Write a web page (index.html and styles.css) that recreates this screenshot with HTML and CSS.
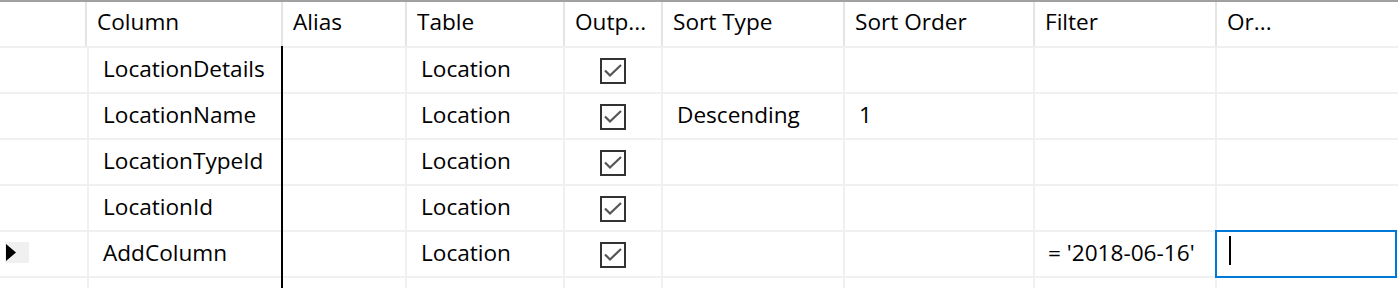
FILE: index.html
```html
<!DOCTYPE html>
<html>
<head>
<meta charset="utf-8">
<link rel="stylesheet" href="styles.css">
</head>
<body>
<div class="grid">
  <div class="row head">
    <div class="cell c0"></div>
    <div class="cell c1">Column</div>
    <div class="cell c2">Alias</div>
    <div class="cell c3">Table</div>
    <div class="cell c4">Outp...</div>
    <div class="cell c5">Sort Type</div>
    <div class="cell c6">Sort Order</div>
    <div class="cell c7">Filter</div>
    <div class="cell c8">Or...</div>
  </div>
  <div class="body">
    <div class="row">
      <div class="cell c0"></div>
      <div class="cell c1">LocationDetails</div>
      <div class="cell c2"></div>
      <div class="cell c3">Location</div>
      <div class="cell c4"><svg class="chk" width="26" height="26" viewBox="0 0 26 26"><rect x="1" y="1" width="24" height="24"/><polyline points="5,12.5 10,17.5 21,7"/></svg></div>
      <div class="cell c5"></div>
      <div class="cell c6"></div>
      <div class="cell c7"></div>
      <div class="cell c8"></div>
    </div>
    <div class="row">
      <div class="cell c0"></div>
      <div class="cell c1">LocationName</div>
      <div class="cell c2"></div>
      <div class="cell c3">Location</div>
      <div class="cell c4"><svg class="chk" width="26" height="26" viewBox="0 0 26 26"><rect x="1" y="1" width="24" height="24"/><polyline points="5,12.5 10,17.5 21,7"/></svg></div>
      <div class="cell c5">Descending</div>
      <div class="cell c6">1</div>
      <div class="cell c7"></div>
      <div class="cell c8"></div>
    </div>
    <div class="row">
      <div class="cell c0"></div>
      <div class="cell c1">LocationTypeId</div>
      <div class="cell c2"></div>
      <div class="cell c3">Location</div>
      <div class="cell c4"><svg class="chk" width="26" height="26" viewBox="0 0 26 26"><rect x="1" y="1" width="24" height="24"/><polyline points="5,12.5 10,17.5 21,7"/></svg></div>
      <div class="cell c5"></div>
      <div class="cell c6"></div>
      <div class="cell c7"></div>
      <div class="cell c8"></div>
    </div>
    <div class="row">
      <div class="cell c0"></div>
      <div class="cell c1">LocationId</div>
      <div class="cell c2"></div>
      <div class="cell c3">Location</div>
      <div class="cell c4"><svg class="chk" width="26" height="26" viewBox="0 0 26 26"><rect x="1" y="1" width="24" height="24"/><polyline points="5,12.5 10,17.5 21,7"/></svg></div>
      <div class="cell c5"></div>
      <div class="cell c6"></div>
      <div class="cell c7"></div>
      <div class="cell c8"></div>
    </div>
    <div class="row">
      <div class="cell c0"><svg class="ind" width="24" height="21" viewBox="0 0 24 21"><polygon points="1,2 1,19 11,10.5"/></svg></div>
      <div class="cell c1">AddColumn</div>
      <div class="cell c2"></div>
      <div class="cell c3">Location</div>
      <div class="cell c4"><svg class="chk" width="26" height="26" viewBox="0 0 26 26"><rect x="1" y="1" width="24" height="24"/><polyline points="5,12.5 10,17.5 21,7"/></svg></div>
      <div class="cell c5"></div>
      <div class="cell c6"></div>
      <div class="cell c7 filter">= '2018-06-16'</div>
      <div class="cell c8 current"><span class="caret"></span></div>
    </div>
    <div class="row">
      <div class="cell c0"></div>
      <div class="cell c1"></div>
      <div class="cell c2"></div>
      <div class="cell c3"></div>
      <div class="cell c4"></div>
      <div class="cell c5"></div>
      <div class="cell c6"></div>
      <div class="cell c7"></div>
      <div class="cell c8"></div>
    </div>
    <div class="splitter"></div>
  </div>
</div>
</body>
</html>
```
FILE: styles.css
```css
html, body {
  margin: 0;
  padding: 0;
  background: #ffffff;
  overflow: hidden;
}
body {
  width: 1398px;
  height: 288px;
  font-family: "Open Sans", "Noto Sans", sans-serif;
  font-size: 22.6px;
  color: #000;
}
.grid {
  border-top: 2px solid #a0a0a0;
  height: 286px;
  overflow: hidden;
}
.row {
  display: flex;
  height: 44px;
  border-bottom: 2px solid #f0f0f0;
}
.cell {
  box-sizing: border-box;
  height: 44px;
  border-right: 2px solid #f0f0f0;
  display: flex;
  align-items: center;
  padding-left: 14px;
  white-space: nowrap;
  line-height: 1;
  padding-bottom: 2px;
}
.head .cell {
  border-right-color: #e4e4e4;
  padding-left: 10px;
  padding-bottom: 4px;
}
.head .c0 { width: 87px; }
.head .c1 { width: 196px; }
.c0 { width: 89px; flex: none; padding-left: 0; }
.c1 { width: 194px; flex: none; }
.c2 { width: 124px; flex: none; }
.c3 { width: 158px; flex: none; }
.c4 { width: 98px; flex: none; }
.c5 { width: 182px; flex: none; }
.c6 { width: 190px; flex: none; }
.c7 { width: 182px; flex: none; }
.c8 { flex: 1; border-right: none; }
.body .c4 {
  justify-content: center;
  padding: 0;
}
.chk {
  display: block;
  margin-top: 2px;
}
.chk rect {
  fill: #fff;
  stroke: #333;
  stroke-width: 2;
}
.chk polyline {
  fill: none;
  stroke: #555;
  stroke-width: 2.2;
}
.body .c0 {
  align-items: flex-start;
  padding: 10px 0 0 5px;
}
.ind {
  display: block;
  background: #f0f0f0;
}
.ind polygon { fill: #000; }
.filter { padding-left: 13px; }
.body {
  position: relative;
}
.splitter {
  position: absolute;
  left: 281px;
  top: -2px;
  width: 2px;
  height: 242px;
  background: #000;
}
.current {
  position: relative;
}
.current::after {
  content: "";
  position: absolute;
  left: -2px;
  top: -2px;
  right: 1px;
  bottom: -2px;
  border: 2px solid #0078d7;
}
.caret {
  position: absolute;
  left: 12px;
  top: 4px;
  width: 2px;
  height: 29px;
  background: #000;
}
```
